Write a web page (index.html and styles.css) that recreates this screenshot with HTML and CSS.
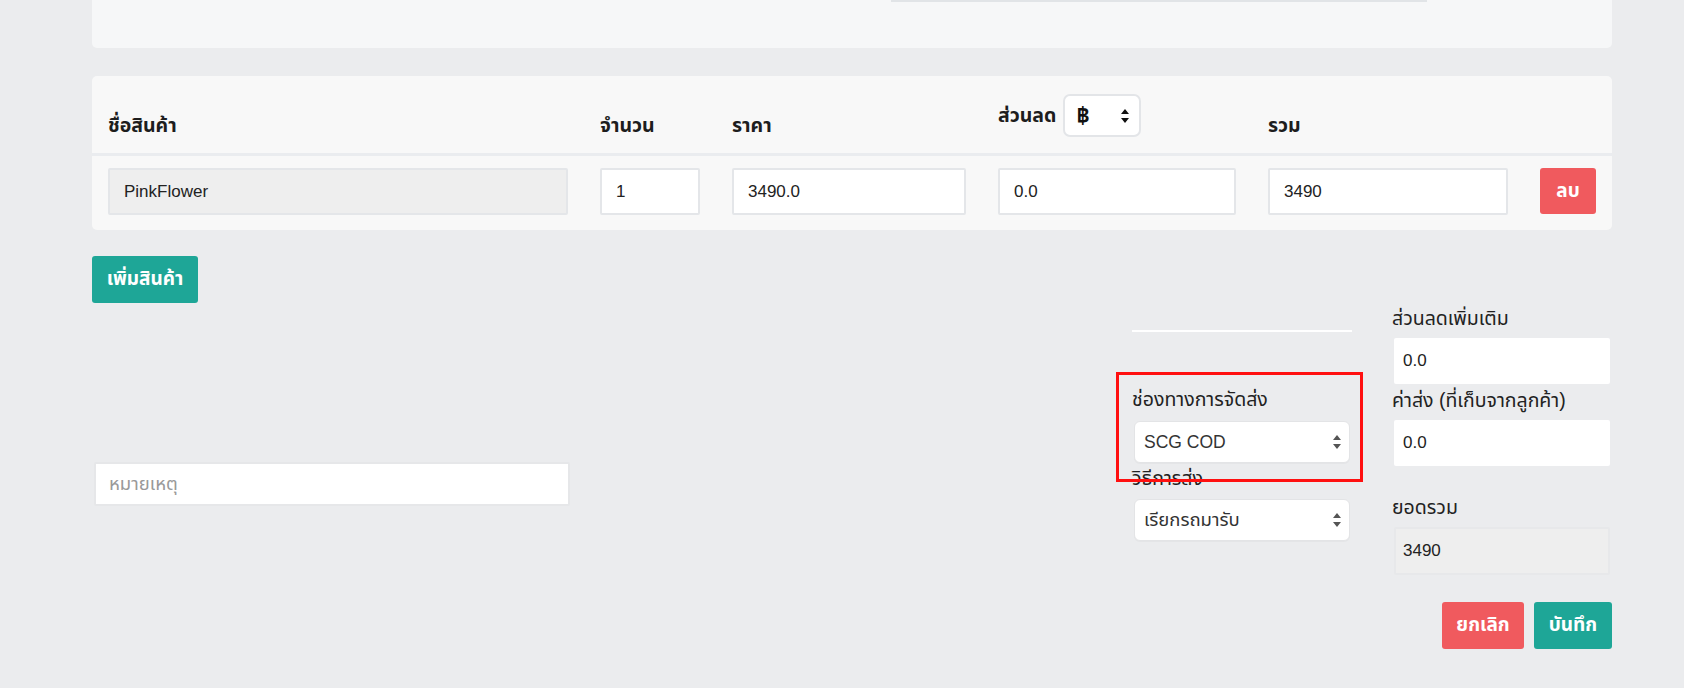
FILE: index.html
```html
<!DOCTYPE html>
<html lang="th">
<head>
<meta charset="utf-8">
<title>Order</title>
<link rel="stylesheet" href="styles.css">
</head>
<body>
<div class="page">
  <div class="top-card">
    <div class="top-input-edge"></div>
  </div>

  <div class="items-card">
    <div class="items-head">
      <div class="hcell">ชื่อสินค้า</div>
      <div class="hcell">จำนวน</div>
      <div class="hcell">ราคา</div>
      <div class="hcell hcell-discount">
        <span>ส่วนลด</span>
        <div class="mini-select">
          <span class="baht">฿</span>
          <svg class="arrows" width="8" height="14" viewBox="0 0 8 14"><path d="M4 0 L8 5 L0 5 Z M4 14 L8 9 L0 9 Z" fill="#111"/></svg>
        </div>
      </div>
      <div class="hcell">รวม</div>
      <div class="hcell"></div>
    </div>
    <div class="items-row">
      <div class="field field-readonly">PinkFlower</div>
      <div class="field">1</div>
      <div class="field">3490.0</div>
      <div class="field">0.0</div>
      <div class="field">3490</div>
      <button class="btn btn-red btn-del">ลบ</button>
    </div>
  </div>

  <button class="btn btn-teal btn-add">เพิ่มสินค้า</button>

  <div class="summary">
    <div class="col-left">
      <div class="field field-remark">หมายเหตุ</div>
    </div>
    <div class="col-mid">
      <div class="rule"></div>
      <div class="label label-ship">ช่องทางการจัดส่ง</div>
      <div class="select">
        <span>SCG COD</span>
        <svg class="arrows" width="8" height="14" viewBox="0 0 8 14"><path d="M4 0 L8 5 L0 5 Z M4 14 L8 9 L0 9 Z" fill="#555"/></svg>
      </div>
      <div class="label label-method">วิธีการส่ง</div>
      <div class="select select-thai">
        <span>เรียกรถมารับ</span>
        <svg class="arrows" width="8" height="14" viewBox="0 0 8 14"><path d="M4 0 L8 5 L0 5 Z M4 14 L8 9 L0 9 Z" fill="#555"/></svg>
      </div>
      <div class="highlight"></div>
    </div>
    <div class="col-right">
      <div class="label">ส่วนลดเพิ่มเติม</div>
      <div class="field field-side">0.0</div>
      <div class="label label-fee">ค่าส่ง (ที่เก็บจากลูกค้า)</div>
      <div class="field field-side">0.0</div>
      <div class="label label-total">ยอดรวม</div>
      <div class="field field-readonly field-side field-total">3490</div>
    </div>
  </div>

  <div class="actions">
    <button class="btn btn-red btn-cancel">ยกเลิก</button>
    <button class="btn btn-teal btn-save">บันทึก</button>
  </div>
</div>
</body>
</html>
```

FILE: styles.css
```css
* { box-sizing: border-box; }

html, body {
  margin: 0;
  padding: 0;
  background: #ebecee;
  font-family: "Liberation Sans", "Noto Sans Thai", "Noto Sans", sans-serif;
  color: #222;
  height: 688px;
  overflow: hidden;
}

.page {
  padding: 0 72px 0 92px;
}

.top-card {
  height: 48px;
  background: #f6f7f8;
  border-radius: 0 0 5px 5px;
  padding-left: 799px;
}

.top-input-edge {
  width: 536px;
  height: 2px;
  background: #e1e4e7;
}

.items-card {
  margin-top: 28px;
  background: #f8f8f8;
  border-radius: 5px;
}

.items-head,
.items-row {
  display: grid;
  grid-template-columns: 460px 100px 234px 238px 240px 56px;
  column-gap: 32px;
  padding: 0 16px;
}

.items-head {
  height: 80px;
  align-items: end;
  padding-bottom: 17px;
  border-bottom: 3px solid #eaecef;
}

.hcell {
  font-size: 19.5px;
  font-weight: bold;
  line-height: 22px;
  color: #1d1d1d;
}

.hcell-discount {
  display: flex;
  align-items: center;
  gap: 7px;
  margin-bottom: -1px;
}

.hcell-discount > span {
  margin-top: -2px;
}

.mini-select {
  width: 78px;
  height: 43px;
  background: #fff;
  border: 2px solid #e3e5e8;
  border-radius: 7px;
  display: flex;
  align-items: center;
  justify-content: space-between;
  padding: 0 10px 0 11px;
}

.baht {
  font-size: 23px;
  font-weight: bold;
  color: #111;
  line-height: 1;
}

.items-row {
  height: 74px;
  align-items: start;
  padding-top: 12px;
}

.field {
  height: 47px;
  background: #fff;
  border: 2px solid #e4e6e9;
  border-radius: 2px;
  display: flex;
  align-items: center;
  padding: 0 14px;
  font-size: 17px;
  color: #222;
}

.field-readonly {
  background: #eeeeee;
}

.btn {
  border: none;
  border-radius: 3px;
  color: #fff;
  font-family: inherit;
  font-weight: bold;
  font-size: 19px;
  cursor: pointer;
  padding: 0;
}

.btn-red { background: #f05a5e; }
.btn-teal { background: #1ea697; }

.btn-del {
  height: 46px;
  width: 56px;
}

.btn-add {
  display: block;
  margin-top: 26px;
  width: 106px;
  height: 47px;
}

.summary {
  display: grid;
  grid-template-columns: 1fr 220px 220px;
  column-gap: 40px;
  margin-top: 4px;
}

.col-left {
  padding-top: 155px;
}

.field-remark {
  margin-left: 2px;
  width: 476px;
  height: 44px;
  border-color: #e6e7e9;
  color: #999;
  font-size: 18.5px;
  padding-left: 13px;
}

.col-mid {
  position: relative;
  padding-top: 23px;
}

.rule {
  height: 2px;
  background: #fff;
}

.label {
  font-size: 19.5px;
  line-height: 22px;
  color: #222;
}

.label-ship {
  margin-top: 56px;
  margin-bottom: 11px;
}

.select {
  margin-left: 2px;
  width: 216px;
  height: 42px;
  background: #fff;
  border: 1px solid #e3e4e6;
  border-radius: 6px;
  display: flex;
  align-items: center;
  justify-content: space-between;
  padding: 0 8px 0 9px;
  font-size: 17.5px;
  color: #333;
  box-shadow: 0 1px 1px rgba(0,0,0,0.03);
}

.select-thai {
  font-size: 18.5px;
}

.label-method {
  margin-top: 4px;
  margin-bottom: 10px;
}

.highlight {
  position: absolute;
  left: -16px;
  top: 65px;
  width: 247px;
  height: 110px;
  border: 3px solid #ff1010;
  pointer-events: none;
}

.col-right .label {
  margin-bottom: 9px;
}

.field-side {
  margin-left: 2px;
  width: 216px;
  height: 46px;
  border: none;
  padding-left: 9px;
}

.col-right .label-fee {
  margin-top: 5px;
}

.col-right .label-total {
  margin-top: 30px;
}

.field-total {
  height: 48px;
  border: 2px solid #e7e8ea;
  padding-left: 7px;
}

.actions {
  display: flex;
  justify-content: flex-end;
  gap: 10px;
  margin-top: 27px;
}

.btn-cancel {
  width: 82px;
  height: 47px;
}

.btn-save {
  width: 78px;
  height: 47px;
}
```
